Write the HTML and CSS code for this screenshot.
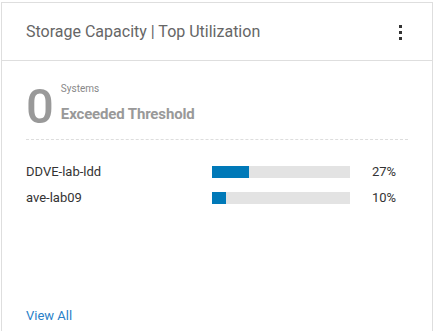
FILE: index.html
```html
<!DOCTYPE html>
<html>
<head>
<meta charset="utf-8">
<link rel="stylesheet" href="styles.css">
</head>
<body>
<div class="card">
  <div class="card-header">
    <div class="title">Storage Capacity | Top Utilization</div>
    <div class="kebab"><span></span><span></span><span></span></div>
  </div>
  <div class="card-body">
    <div class="summary">
      <div class="big">0</div>
      <div class="labels">
        <div class="small">Systems</div>
        <div class="strong">Exceeded Threshold</div>
      </div>
    </div>
    <div class="rows">
      <div class="row">
        <div class="name">DDVE-lab-ldd</div>
        <div class="bar"><div class="fill" style="width:27%"></div></div>
        <div class="pct">27%</div>
      </div>
      <div class="row">
        <div class="name">ave-lab09</div>
        <div class="bar"><div class="fill" style="width:10%"></div></div>
        <div class="pct">10%</div>
      </div>
    </div>
    <a class="view-all" href="#">View All</a>
  </div>
</div>
</body>
</html>
```
FILE: styles.css
```css
html, body {
  margin: 0;
  padding: 0;
  background: #ffffff;
  font-family: Roboto, "Liberation Sans", sans-serif;
}
.card {
  margin: 2px 0 0 1px;
  width: 432px;
  box-sizing: border-box;
  height: 360px;
  border: 1px solid #dedede;
  background: #fff;
}
.card-header {
  height: 57px;
  border-bottom: 1px solid #dedede;
  display: flex;
  align-items: center;
  justify-content: space-between;
  padding: 0 30px 0 24px;
}
.title {
  font-size: 16px;
  color: #666;
  padding-bottom: 1px;
}
.kebab {
  display: flex;
  flex-direction: column;
  gap: 3px;
  margin-top: 1px;
}
.kebab span {
  width: 3px;
  height: 3px;
  background: #333;
}
.card-body {
  padding: 0 24px;
}
.summary {
  display: flex;
  align-items: flex-start;
  gap: 7px;
  padding-top: 20px;
  height: 58px;
  border-bottom: 1px dashed #dddddd;
}
.big {
  font-size: 49px;
  line-height: 49px;
  font-weight: 500;
  color: #999;
  margin-top: 1px;
}
.labels {
  padding-top: 2px;
}
.small {
  font-size: 10px;
  color: #888;
  line-height: 12px;
}
.strong {
  font-size: 15px;
  font-weight: bold;
  color: #999;
  margin-top: 10px;
  letter-spacing: -0.15px;
}
.rows {
  padding-top: 24px;
  display: flex;
  flex-direction: column;
  gap: 14px;
}
.row {
  display: grid;
  grid-template-columns: 186px 138px 1fr;
  align-items: center;
  height: 12px;
}
.name {
  font-size: 13px;
  color: #333;
}
.bar {
  height: 12px;
  background: #e3e3e3;
}
.fill {
  height: 100%;
  background: #0079b8;
}
.pct {
  font-size: 13px;
  color: #333;
  padding-left: 22px;
}
.view-all {
  display: block;
  margin-top: 106px;
  font-size: 13px;
  color: #2a7fc8;
  text-decoration: none;
}
```
